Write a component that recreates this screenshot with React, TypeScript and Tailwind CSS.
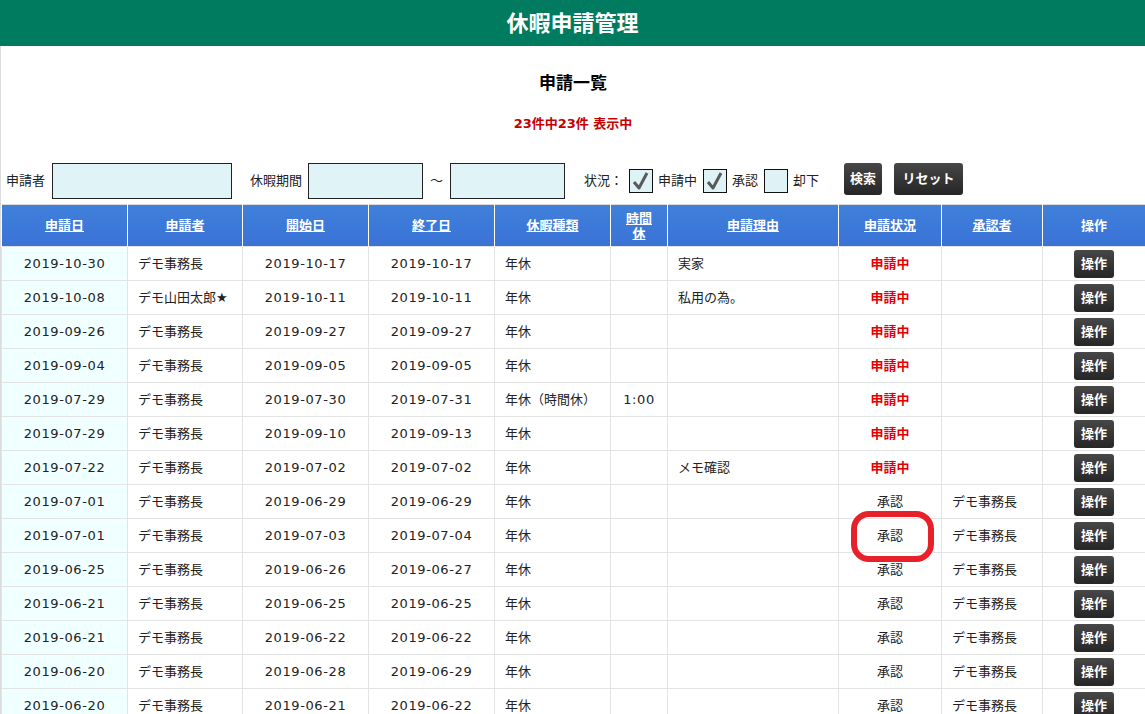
import React from 'react';

type Row = {
  applied: string;
  name: string;
  start: string;
  end: string;
  kind: string;
  hours?: string;
  reason?: string;
  status: '申請中' | '承認';
  approver?: string;
  marked?: boolean;
};

const rows: Row[] = [
  { applied: '2019-10-30', name: 'デモ事務長', start: '2019-10-17', end: '2019-10-17', kind: '年休', reason: '実家', status: '申請中' },
  { applied: '2019-10-08', name: 'デモ山田太郎★', start: '2019-10-11', end: '2019-10-11', kind: '年休', reason: '私用の為。', status: '申請中' },
  { applied: '2019-09-26', name: 'デモ事務長', start: '2019-09-27', end: '2019-09-27', kind: '年休', status: '申請中' },
  { applied: '2019-09-04', name: 'デモ事務長', start: '2019-09-05', end: '2019-09-05', kind: '年休', status: '申請中' },
  { applied: '2019-07-29', name: 'デモ事務長', start: '2019-07-30', end: '2019-07-31', kind: '年休（時間休）', hours: '1:00', status: '申請中' },
  { applied: '2019-07-29', name: 'デモ事務長', start: '2019-09-10', end: '2019-09-13', kind: '年休', status: '申請中' },
  { applied: '2019-07-22', name: 'デモ事務長', start: '2019-07-02', end: '2019-07-02', kind: '年休', reason: 'メモ確認', status: '申請中' },
  { applied: '2019-07-01', name: 'デモ事務長', start: '2019-06-29', end: '2019-06-29', kind: '年休', status: '承認', approver: 'デモ事務長' },
  { applied: '2019-07-01', name: 'デモ事務長', start: '2019-07-03', end: '2019-07-04', kind: '年休', status: '承認', approver: 'デモ事務長', marked: true },
  { applied: '2019-06-25', name: 'デモ事務長', start: '2019-06-26', end: '2019-06-27', kind: '年休', status: '承認', approver: 'デモ事務長' },
  { applied: '2019-06-21', name: 'デモ事務長', start: '2019-06-25', end: '2019-06-25', kind: '年休', status: '承認', approver: 'デモ事務長' },
  { applied: '2019-06-21', name: 'デモ事務長', start: '2019-06-22', end: '2019-06-22', kind: '年休', status: '承認', approver: 'デモ事務長' },
  { applied: '2019-06-20', name: 'デモ事務長', start: '2019-06-28', end: '2019-06-29', kind: '年休', status: '承認', approver: 'デモ事務長' },
  { applied: '2019-06-20', name: 'デモ事務長', start: '2019-06-21', end: '2019-06-22', kind: '年休', status: '承認', approver: 'デモ事務長' },
];

const Checkbox = ({ checked }: { checked: boolean }) => (
  <span className="flex h-[24px] w-[24px] items-center justify-center border border-[#111] bg-[#dff3f6]">
    {checked && (
      <svg width="20" height="20" viewBox="0 0 20 20">
        <path d="M3 11 L8 17 L16 2" fill="none" stroke="#5a5a5a" strokeWidth="3" strokeLinejoin="round" />
      </svg>
    )}
  </span>
);

const DarkButton = ({ children, className = '' }: { children: React.ReactNode; className?: string }) => (
  <button
    className={`rounded-[3px] bg-gradient-to-b from-[#474747] to-[#262626] font-bold text-white ${className}`}
  >
    {children}
  </button>
);

const headCell = 'border-x border-white px-1 text-center font-bold text-white';
const cell = 'border border-[#e3e3e3] px-[10px]';

export default function App() {
  return (
    <div
      className="min-h-[714px] bg-white text-[13px] text-[#222]"
      style={{ fontFamily: '"DejaVu Sans", "Noto Sans CJK JP", sans-serif' }}
    >
      {/* title bar */}
      <div className="flex h-[46px] items-center justify-center bg-[#007b5f]">
        <h1 className="text-[22px] font-bold text-white">休暇申請管理</h1>
      </div>

      <div className="border-l border-[#dcdcdc]">
        <h2 className="pt-[24px] text-center text-[17px] leading-[26px] font-bold text-black">申請一覧</h2>
        <p className="mt-[18px] text-center leading-[20px] font-bold text-[#c40000]">23件中23件 表示中</p>

        {/* filters */}
        <div className="mt-[29px] flex h-[36px] items-center pl-[5px]">
          <span>申請者</span>
          <input className="ml-[7px] h-[36px] w-[180px] border border-[#222] bg-[#e0f4f7]" />
          <span className="ml-[18px]">休暇期間</span>
          <input className="ml-[6px] h-[36px] w-[115px] border border-[#222] bg-[#e0f4f7]" />
          <span className="mx-[7px]">～</span>
          <input className="h-[36px] w-[115px] border border-[#222] bg-[#e0f4f7]" />
          <span className="ml-[19px] mr-[6px]">状況：</span>
          <Checkbox checked />
          <span className="ml-[5px] mr-[6px]">申請中</span>
          <Checkbox checked />
          <span className="ml-[5px] mr-[6px]">承認</span>
          <Checkbox checked={false} />
          <span className="ml-[5px]">却下</span>
          <div className="ml-[25px] flex gap-[13px] self-start">
            <DarkButton className="h-[32px] w-[38px]">検索</DarkButton>
            <DarkButton className="-ml-[1px] h-[32px] w-[69px]">リセット</DarkButton>
          </div>
        </div>

        {/* list */}
        <table className="mt-[5px] w-[1144px] table-fixed border-collapse border-t border-[#dcdcdc]">
          <colgroup>
            <col className="w-[126px]" />
            <col className="w-[115px]" />
            <col className="w-[126px]" />
            <col className="w-[126px]" />
            <col className="w-[116px]" />
            <col className="w-[57px]" />
            <col className="w-[171px]" />
            <col className="w-[103px]" />
            <col className="w-[101px]" />
            <col className="w-[103px]" />
          </colgroup>
          <thead>
            <tr className="h-[42px] bg-gradient-to-b from-[#4080da] to-[#3a72d6]">
              <th className={headCell}><span className="underline">申請日</span></th>
              <th className={headCell}><span className="underline">申請者</span></th>
              <th className={headCell}><span className="underline">開始日</span></th>
              <th className={headCell}><span className="underline">終了日</span></th>
              <th className={headCell}><span className="underline">休暇種類</span></th>
              <th className={`${headCell} leading-[15px]`}>
                <span className="underline">時間</span>
                <br />
                <span className="underline">休</span>
              </th>
              <th className={headCell}><span className="underline">申請理由</span></th>
              <th className={headCell}><span className="underline">申請状況</span></th>
              <th className={headCell}><span className="underline">承認者</span></th>
              <th className={headCell}>操作</th>
            </tr>
          </thead>
          <tbody>
            {rows.map((r, i) => (
              <tr key={i} className="h-[34px]">
                <td className={`${cell} bg-[#f0ffff] text-center tracking-[0.6px]`}>{r.applied}</td>
                <td className={cell}>{r.name}</td>
                <td className={`${cell} text-center tracking-[0.6px]`}>{r.start}</td>
                <td className={`${cell} text-center tracking-[0.6px]`}>{r.end}</td>
                <td className={cell}>{r.kind}</td>
                <td className={`${cell} px-0 text-center tracking-[0.6px]`}>{r.hours}</td>
                <td className={cell}>{r.reason}</td>
                <td className={`${cell} relative text-center`}>
                  {r.status === '申請中' ? (
                    <span className="font-bold text-[#e60000]">申請中</span>
                  ) : (
                    <span>承認</span>
                  )}
                  {r.marked && (
                    <span className="pointer-events-none absolute top-[-8px] left-[12px] h-[51px] w-[83px] rounded-[18px] border-[6px] border-[#e8202a]" />
                  )}
                </td>
                <td className={cell}>{r.approver}</td>
                <td className={`${cell} text-center`}>
                  <DarkButton className="mt-[1px] h-[28px] w-[40px] align-middle">操作</DarkButton>
                </td>
              </tr>
            ))}
          </tbody>
        </table>
      </div>
    </div>
  );
}
